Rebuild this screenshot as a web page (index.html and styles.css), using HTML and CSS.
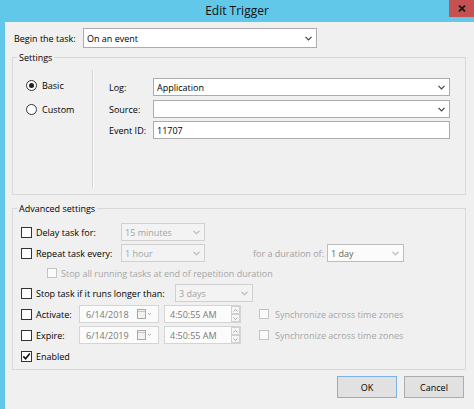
FILE: index.html
```html
<!DOCTYPE html>
<html>
<head>
<meta charset="utf-8">
<link rel="stylesheet" href="styles.css">
</head>
<body>
<div class="window">
  <div class="titlebar">
    <span></span>
    <span class="title">Edit Trigger</span>
    <span class="close"><svg width="8" height="7" viewBox="0 0 8 7"><path d="M1 0.5 L7 6.5 M7 0.5 L1 6.5" stroke="#1b1b1b" stroke-width="1.8" fill="none"/></svg></span>
  </div>
  <div class="client">
    <div class="begin-row">
      <span class="begin-label">Begin the task:</span>
      <div class="combo combo-begin"><span>On an event</span><svg class="chev" width="7" height="5" viewBox="0 0 7 5"><path d="M0.5 0.8 L3.5 3.8 L6.5 0.8" fill="none" stroke="#444" stroke-width="1.2"/></svg></div>
    </div>

    <fieldset class="group">
      <legend>Settings</legend>
      <div class="settings-inner">
        <div class="radios">
          <div class="radio"><span class="rb rb-on"><span class="dot"></span></span><span>Basic</span></div>
          <div class="radio"><span class="rb"></span><span>Custom</span></div>
        </div>
        <div class="vsep"></div>
        <div class="fields">
          <div class="frow">
            <span class="flabel">Log:</span>
            <div class="combo field"><span>Application</span><svg class="chev" width="7" height="5" viewBox="0 0 7 5"><path d="M0.5 0.8 L3.5 3.8 L6.5 0.8" fill="none" stroke="#444" stroke-width="1.2"/></svg></div>
          </div>
          <div class="frow">
            <span class="flabel">Source:</span>
            <div class="combo field"><span></span><svg class="chev" width="7" height="5" viewBox="0 0 7 5"><path d="M0.5 0.8 L3.5 3.8 L6.5 0.8" fill="none" stroke="#444" stroke-width="1.2"/></svg></div>
          </div>
          <div class="frow">
            <span class="flabel">Event ID:</span>
            <div class="textbox field"><span>11707</span></div>
          </div>
        </div>
      </div>
    </fieldset>

    <fieldset class="group adv">
      <legend>Advanced settings</legend>
      <div class="adv-inner">
        <div class="arow">
          <span class="cb"></span>
          <span class="alabel w-delay">Delay task for:</span>
          <div class="combo dis w84"><span>15 minutes</span><svg class="chev" width="7" height="5" viewBox="0 0 7 5"><path d="M0.5 0.8 L3.5 3.8 L6.5 0.8" fill="none" stroke="#b4b4b4" stroke-width="1.1"/></svg></div>
        </div>
        <div class="arow">
          <span class="cb"></span>
          <span class="alabel w-delay">Repeat task every:</span>
          <div class="combo dis w84"><span>1 hour</span><svg class="chev" width="7" height="5" viewBox="0 0 7 5"><path d="M0.5 0.8 L3.5 3.8 L6.5 0.8" fill="none" stroke="#b4b4b4" stroke-width="1.1"/></svg></div>
          <span class="duration-label">for a duration of:</span>
          <div class="combo dis day w77"><span>1 day</span><svg class="chev" width="7" height="5" viewBox="0 0 7 5"><path d="M0.5 0.8 L3.5 3.8 L6.5 0.8" fill="none" stroke="#b4b4b4" stroke-width="1.1"/></svg></div>
        </div>
        <div class="arow short">
          <span class="cb cb-dis cb-indent"></span>
          <span class="dis-text">Stop all running tasks at end of repetition duration</span>
        </div>
        <div class="arow">
          <span class="cb"></span>
          <span class="alabel w-stop">Stop task if it runs longer than:</span>
          <div class="combo dis w78"><span>3 days</span><svg class="chev" width="7" height="5" viewBox="0 0 7 5"><path d="M0.5 0.8 L3.5 3.8 L6.5 0.8" fill="none" stroke="#b4b4b4" stroke-width="1.1"/></svg></div>
        </div>
        <div class="arow">
          <span class="cb"></span>
          <span class="alabel w-act">Activate:</span>
          <div class="datebox"><span>6/14/2018</span>
            <svg class="cal" width="15" height="10" viewBox="0 0 15 10"><rect x="0.5" y="0.5" width="8" height="9" fill="#f2f2f2" stroke="#a8a8a8"/><line x1="1" y1="2.5" x2="8" y2="2.5" stroke="#c4c4c4"/><path d="M11 4 L12.5 5.5 L14 4" fill="none" stroke="#b0b0b0" stroke-width="1"/></svg>
          </div>
          <div class="timebox"><span>4:50:55 AM</span>
            <span class="spin"><span class="spinbtn"><svg width="5" height="3" viewBox="0 0 5 3"><path d="M0.5 2.5 L2.5 0.5 L4.5 2.5" fill="none" stroke="#999" stroke-width="0.9"/></svg></span><span class="spinbtn"><svg width="5" height="3" viewBox="0 0 5 3"><path d="M0.5 0.5 L2.5 2.5 L4.5 0.5" fill="none" stroke="#999" stroke-width="0.9"/></svg></span></span>
          </div>
          <span class="cb cb-dis sync-cb"></span>
          <span class="dis-text">Synchronize across time zones</span>
        </div>
        <div class="arow">
          <span class="cb"></span>
          <span class="alabel w-act">Expire:</span>
          <div class="datebox"><span>6/14/2019</span>
            <svg class="cal" width="15" height="10" viewBox="0 0 15 10"><rect x="0.5" y="0.5" width="8" height="9" fill="#f2f2f2" stroke="#a8a8a8"/><line x1="1" y1="2.5" x2="8" y2="2.5" stroke="#c4c4c4"/><path d="M11 4 L12.5 5.5 L14 4" fill="none" stroke="#b0b0b0" stroke-width="1"/></svg>
          </div>
          <div class="timebox"><span>4:50:55 AM</span>
            <span class="spin"><span class="spinbtn"><svg width="5" height="3" viewBox="0 0 5 3"><path d="M0.5 2.5 L2.5 0.5 L4.5 2.5" fill="none" stroke="#999" stroke-width="0.9"/></svg></span><span class="spinbtn"><svg width="5" height="3" viewBox="0 0 5 3"><path d="M0.5 0.5 L2.5 2.5 L4.5 0.5" fill="none" stroke="#999" stroke-width="0.9"/></svg></span></span>
          </div>
          <span class="cb cb-dis sync-cb"></span>
          <span class="dis-text">Synchronize across time zones</span>
        </div>
        <div class="arow">
          <span class="cb"><svg width="9" height="9" viewBox="0 0 9 9"><path d="M1.3 4.4 L3.6 6.8 L7.8 1.6" fill="none" stroke="#111" stroke-width="1.6"/></svg></span>
          <span class="alabel">Enabled</span>
        </div>
      </div>
    </fieldset>

    <div class="buttons">
      <button class="btn btn-default">OK</button>
      <button class="btn">Cancel</button>
    </div>
  </div>
</div>
</body>
</html>
```

FILE: styles.css
```css
* { box-sizing: border-box; }
html, body { margin: 0; padding: 0; }
body {
  width: 474px;
  height: 409px;
  overflow: hidden;
  background: #f0f0f0;
  font-family: "Open Sans", "Noto Sans", sans-serif;
  font-size: 9px;
  color: #000;
}
.window {
  width: 474px;
  height: 409px;
  display: flex;
  flex-direction: column;
  background: #62c8ea;
}
.titlebar {
  height: 22px;
  flex: none;
  display: grid;
  grid-template-columns: 1fr auto 1fr;
  align-items: start;
}
.title {
  font-size: 12px;
  line-height: 21px;
  color: #111;
}
.close {
  justify-self: end;
  width: 25px;
  height: 17px;
  background: #c75050;
  display: flex;
  align-items: center;
  justify-content: center;
}
.client {
  flex: 1;
  margin-left: 5px;
  background: #f0f0f0;
  padding: 6px 8px 0 7px;
}

/* begin row */
.begin-row {
  display: flex;
  align-items: center;
  height: 20px;
}
.begin-label {
  width: 69px;
  margin-left: 2px;
}
.combo {
  display: flex;
  align-items: center;
  justify-content: space-between;
  background: #fff;
  border: 1px solid #acacac;
  padding-left: 3px;
  white-space: nowrap;
}
.combo .chev { margin-right: 4px; flex: none; }
.combo-begin { width: 234px; height: 20px; }

/* groups */
.group {
  margin: 3px 0 0 0;
  padding: 0;
  border: 1px solid #d9d9d9;
  min-width: 0;
}
.group legend {
  margin-left: 4px;
  padding: 0 2px;
  line-height: 13px;
  height: 13px;
}
.settings-inner {
  display: flex;
  height: 130px;
}
.radios {
  width: 79px;
  padding: 14px 0 0 13px;
}
.radio {
  display: flex;
  align-items: center;
  gap: 5px;
  height: 14px;
  margin-bottom: 10px;
}
.rb {
  width: 11px;
  height: 11px;
  border: 1px solid #333;
  border-radius: 50%;
  background: #fff;
  display: flex;
  align-items: center;
  justify-content: center;
}
.rb .dot {
  width: 5px;
  height: 5px;
  border-radius: 50%;
  background: #222;
}
.vsep {
  width: 2px;
  margin: 6px 0;
  border-left: 1px solid #d3d3d3;
  border-right: 1px solid #fbfbfb;
}
.fields {
  padding: 14px 0 0 15px;
}
.frow {
  display: flex;
  align-items: center;
  height: 18px;
  margin-bottom: 3px;
}
.frow:first-child { margin-bottom: 4px; }
.flabel { width: 44px; }
.field { width: 297px; height: 18px; }
.textbox {
  background: #fff;
  border: 1px solid #acacac;
  padding-left: 3px;
  display: flex;
  align-items: center;
}

/* advanced */
.adv { margin-top: 7px; }
.adv-inner {
  padding: 8px 0 4px 8px;
}
.arow {
  display: flex;
  align-items: center;
  height: 18px;
  margin-bottom: 3px;
  white-space: nowrap;
}
.arow:last-child { margin-bottom: 0; }
.arow.short { height: 16px; }
.cb {
  width: 11px;
  height: 11px;
  flex: none;
  border: 1px solid #333;
  background: #fff;
  margin-right: 4px;
  display: flex;
  align-items: center;
  justify-content: center;
}
.cb-dis {
  width: 10px;
  height: 10px;
  border-color: #c3c3c3;
  background: #fafafa;
}
.cb-indent { margin-left: 26px; }
.sync-cb { margin-left: 18px; margin-right: 6px; }
.alabel { flex: none; }
.w-delay { width: 85px; }
.w-stop { width: 139px; }
.w-act { width: 43px; }
.dis {
  background: #f3f3f3;
  border-color: #d0d0d0;
  color: #a3a3a3;
  height: 18px;
}
.day { background: #fbfbfb; border-color: #bdbdbd; color: #666; }
.w84 { width: 84px; }
.w77 { width: 77px; }
.w78 { width: 78px; }
.duration-label {
  width: 122px;
  text-align: right;
  padding-right: 3px;
  color: #a0a0a0;
}
.dis-text { color: #a6a6a6; }
.datebox {
  width: 80px;
  height: 18px;
  border: 1px solid #d4d4d4;
  background: #fbfbfb;
  display: flex;
  align-items: center;
  justify-content: space-between;
  padding: 0 6px 0 6px;
  color: #7a7a7a;
  flex: none;
}
.timebox {
  width: 77px;
  height: 18px;
  margin-left: 5px;
  border: 1px solid #d4d4d4;
  background: #fbfbfb;
  display: flex;
  align-items: center;
  justify-content: space-between;
  padding: 0 0 0 5px;
  color: #7a7a7a;
  flex: none;
}
.spin {
  display: flex;
  flex-direction: column;
  width: 9px;
  height: 16px;
  gap: 0;
}
.spinbtn {
  flex: 1;
  border: 1px solid #d0d0d0;
  display: flex;
  align-items: center;
  justify-content: center;
  background: #f7f7f7;
}

/* buttons */
.buttons {
  display: flex;
  justify-content: flex-end;
  gap: 7px;
  margin: 6px 2px 0 0;
}
.btn {
  width: 60px;
  height: 22px;
  font-family: "Open Sans", "Noto Sans", sans-serif;
  font-size: 9px;
  color: #000;
  background: #e1e1e1;
  border: 1px solid #adadad;
  padding: 0;
}
.btn-default { border-color: #7db2e6; }
```
